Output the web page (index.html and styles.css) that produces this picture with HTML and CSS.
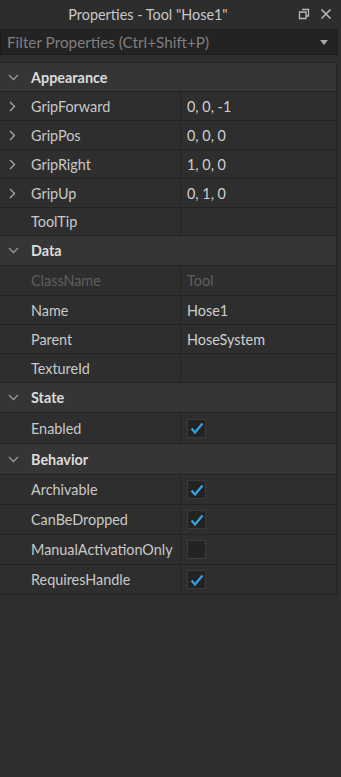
FILE: index.html
```html
<!DOCTYPE html>
<html>
<head>
<meta charset="utf-8">
<link rel="stylesheet" href="styles.css">
</head>
<body>
<div class="panel">
  <div class="titlebar">
    <span class="title">Properties - Tool "Hose1"</span>
    <span class="ticons">
      <svg width="12" height="12" viewBox="0 0 12 12"><path d="M4 1.5h6.5v6.5h-2.5M1.5 4h6.5v6.5h-6.5z" fill="none" stroke="#bbb" stroke-width="1.3"/></svg>
      <svg width="12" height="12" viewBox="0 0 12 12"><path d="M1.5 1.5l9 9M10.5 1.5l-9 9" stroke="#bbb" stroke-width="1.5"/></svg>
    </span>
  </div>
  <div class="filter">
    <span>Filter Properties (Ctrl+Shift+P)</span>
    <svg width="8" height="5" viewBox="0 0 8 5"><path d="M0 0h8l-4 5z" fill="#aaa"/></svg>
  </div>
  <div class="grid">
    <div class="row head h29"><span class="chev"><svg width="11" height="7" viewBox="0 0 11 7"><path d="M1 1l4.5 4.5L10 1" fill="none" stroke="#999" stroke-width="1.3"/></svg></span><span class="hname">Appearance</span></div>
    <div class="row h29"><span class="chev"><svg width="7" height="11" viewBox="0 0 7 11"><path d="M1 1l4.5 4.5L1 10" fill="none" stroke="#aaa" stroke-width="1.3"/></svg></span><span class="name">GripForward</span><span class="val">0, 0, -1</span></div>
    <div class="row h29"><span class="chev"><svg width="7" height="11" viewBox="0 0 7 11"><path d="M1 1l4.5 4.5L1 10" fill="none" stroke="#aaa" stroke-width="1.3"/></svg></span><span class="name">GripPos</span><span class="val">0, 0, 0</span></div>
    <div class="row h29"><span class="chev"><svg width="7" height="11" viewBox="0 0 7 11"><path d="M1 1l4.5 4.5L1 10" fill="none" stroke="#aaa" stroke-width="1.3"/></svg></span><span class="name">GripRight</span><span class="val">1, 0, 0</span></div>
    <div class="row h29"><span class="chev"><svg width="7" height="11" viewBox="0 0 7 11"><path d="M1 1l4.5 4.5L1 10" fill="none" stroke="#aaa" stroke-width="1.3"/></svg></span><span class="name">GripUp</span><span class="val">0, 1, 0</span></div>
    <div class="row h28"><span class="chev"></span><span class="name">ToolTip</span><span class="val"></span></div>
    <div class="row head h30"><span class="chev"><svg width="11" height="7" viewBox="0 0 11 7"><path d="M1 1l4.5 4.5L10 1" fill="none" stroke="#999" stroke-width="1.3"/></svg></span><span class="hname">Data</span></div>
    <div class="row h30 dim"><span class="chev"></span><span class="name">ClassName</span><span class="val">Tool</span></div>
    <div class="row h29"><span class="chev"></span><span class="name">Name</span><span class="val">Hose1</span></div>
    <div class="row h29"><span class="chev"></span><span class="name">Parent</span><span class="val">HoseSystem</span></div>
    <div class="row h29"><span class="chev"></span><span class="name">TextureId</span><span class="val"></span></div>
    <div class="row head h30"><span class="chev"><svg width="11" height="7" viewBox="0 0 11 7"><path d="M1 1l4.5 4.5L10 1" fill="none" stroke="#999" stroke-width="1.3"/></svg></span><span class="hname">State</span></div>
    <div class="row h31"><span class="chev"></span><span class="name">Enabled</span><span class="val"><span class="cb"><svg width="14" height="12" viewBox="0 0 14 12"><path d="M1.5 6.5l3.5 4L12.5 1.5" fill="none" stroke="#33a5e3" stroke-width="2.2"/></svg></span></span></div>
    <div class="row head h31"><span class="chev"><svg width="11" height="7" viewBox="0 0 11 7"><path d="M1 1l4.5 4.5L10 1" fill="none" stroke="#999" stroke-width="1.3"/></svg></span><span class="hname">Behavior</span></div>
    <div class="row h30"><span class="chev"></span><span class="name">Archivable</span><span class="val"><span class="cb"><svg width="14" height="12" viewBox="0 0 14 12"><path d="M1.5 6.5l3.5 4L12.5 1.5" fill="none" stroke="#33a5e3" stroke-width="2.2"/></svg></span></span></div>
    <div class="row h30"><span class="chev"></span><span class="name">CanBeDropped</span><span class="val"><span class="cb"><svg width="14" height="12" viewBox="0 0 14 12"><path d="M1.5 6.5l3.5 4L12.5 1.5" fill="none" stroke="#33a5e3" stroke-width="2.2"/></svg></span></span></div>
    <div class="row h30"><span class="chev"></span><span class="name">ManualActivationOnly</span><span class="val"><span class="cb"></span></span></div>
    <div class="row h30"><span class="chev"></span><span class="name">RequiresHandle</span><span class="val"><span class="cb"><svg width="14" height="12" viewBox="0 0 14 12"><path d="M1.5 6.5l3.5 4L12.5 1.5" fill="none" stroke="#33a5e3" stroke-width="2.2"/></svg></span></span></div>
  </div>
</div>
</body>
</html>
```

FILE: styles.css
```css
html, body {
  margin: 0;
  padding: 0;
  background: #2e2e2e;
}
body {
  font-family: Lato, "Open Sans", sans-serif;
  font-size: 14.4px;
  color: #cccccc;
}
.panel {
  width: 341px;
  height: 777px;
  background: #2e2e2e;
  display: flex;
  flex-direction: column;
}
.titlebar {
  height: 29px;
  display: flex;
  align-items: center;
  justify-content: center;
  position: relative;
  background: #2d2d2d;
}
.title {
  color: #c8c8c8;
  font-size: 14.4px;
  margin-right: 45px;
}
.ticons {
  position: absolute;
  right: 9px;
  top: 8px;
  display: flex;
  gap: 10px;
}
.filter {
  height: 24px;
  margin: 0 3px 0 0;
  background: #232323;
  border: 1px solid #1c1c1c;
  display: flex;
  align-items: center;
  justify-content: space-between;
  padding: 0 9px 0 6px;
  color: #7f7f7f;
  font-size: 15.3px;
}
.grid {
  margin-top: 7px;
  width: 336px;
  border-top: 1px solid #262626;
  border-right: 1px solid #232323;
}
.row {
  display: flex;
  align-items: center;
  border-bottom: 1px solid #232323;
  box-sizing: border-box;
  background: #2e2e2e;
}
.h28 { height: 28px; }
.h29 { height: 29px; }
.h30 { height: 30px; }
.h31 { height: 31px; }
.row.head {
  background: #353535;
}
.chev {
  width: 31px;
  flex: none;
  display: flex;
  justify-content: flex-start;
  padding-left: 9px;
  box-sizing: border-box;
  align-items: center;
}
.row.head .chev { padding-left: 8px; }
.name {
  width: 149px;
  flex: none;
  color: #c9c9c9;
  white-space: nowrap;
}
.hname {
  font-weight: bold;
  color: #dcdcdc;
}
.val {
  align-self: stretch;
  flex: 1;
  border-left: 1px solid #232323;
  display: flex;
  align-items: center;
  padding-left: 6px;
  color: #cfcfcf;
}
.dim .name, .dim .val { color: #5f5f5f; }
.cb {
  width: 17px;
  height: 17px;
  background: #232323;
  border: 1px solid #3a3a3a;
  display: flex;
  align-items: center;
  justify-content: center;
}
```
